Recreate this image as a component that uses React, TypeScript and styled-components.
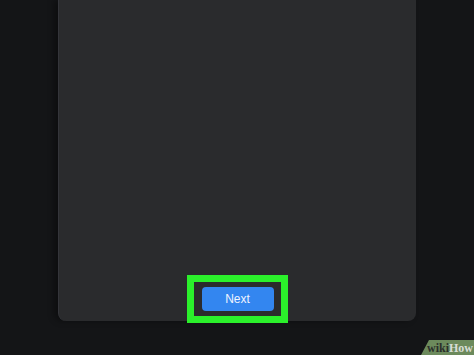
import styled, { createGlobalStyle } from 'styled-components';

const GlobalStyle = createGlobalStyle`
  html, body {
    margin: 0;
    padding: 0;
    background: #141517;
    font-family: "Liberation Sans", Arial, sans-serif;
  }
`

const App = () => {
  return (
    <>
      <GlobalStyle />
      <Page>
        <Panel>
          <Highlight>
            <NextButton>Next</NextButton>
          </Highlight>
        </Panel>
        <Logo>
          <Wiki>wiki</Wiki>
          <How>How</How>
        </Logo>
      </Page>
    </>
  );
}

const Page = styled.div`
  position: relative;
  width: 474px;
  height: 355px;
  overflow: hidden;
  display: flex;
  justify-content: center;
  background: #141517;
`

const Panel = styled.div`
  box-sizing: border-box;
  width: 358px;
  height: 321px;
  background: #2a2b2d;
  border-left: 1px solid #34353a;
  border-radius: 0 0 8px 8px;
  box-shadow: -4px 0 6px rgba(0, 0, 0, 0.35);
  display: flex;
  flex-direction: column;
  justify-content: flex-end;
  align-items: center;
`

const Highlight = styled.div`
  box-sizing: border-box;
  width: 101px;
  height: 48px;
  margin-bottom: -2px;
  border: 7px solid #2bf02b;
  background: #2b2b2c;
  display: flex;
  align-items: center;
  justify-content: center;
`

const NextButton = styled.button`
  width: 72px;
  height: 24px;
  border: none;
  border-radius: 4px;
  background: #3386f0;
  color: #eef4ff;
  font-family: "Liberation Sans", Arial, sans-serif;
  font-size: 12px;
  padding: 0;
  cursor: pointer;
`

const Logo = styled.div`
  position: absolute;
  right: 0;
  bottom: 0;
  width: 53px;
  height: 15px;
  padding-left: 6px;
  box-sizing: border-box;
  background: #6c8a5c;
  clip-path: polygon(8px 0, 100% 0, 100% 100%, 0 100%);
  display: flex;
  align-items: flex-end;
  font-family: "Liberation Serif", "Times New Roman", serif;
  font-weight: bold;
  font-size: 12px;
  line-height: 14px;
`

const Wiki = styled.span`
  color: #2b2f2a;
`

const How = styled.span`
  color: #d9ddd6;
`

export default App;
